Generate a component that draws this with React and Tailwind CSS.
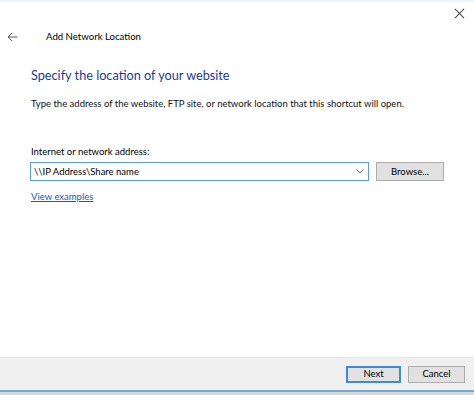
import React from 'react';

const font = { fontFamily: 'Lato, "Noto Sans", sans-serif' };

export default function App() {
  return (
    <div className="w-[474px] h-[395px] bg-white flex flex-col overflow-hidden text-[#000]" style={font}>
      {/* Title bar */}
      <div className="h-[24px] flex items-start justify-end border-t-2 border-[#eaf6fb]">
        <button className="w-[30px] h-[22px] flex items-center justify-center text-[#333]">
          <svg width="11" height="11" viewBox="0 0 12 12" stroke="#444" strokeWidth="1.1">
            <path d="M1 1 L11 11 M11 1 L1 11" />
          </svg>
        </button>
      </div>

      {/* Nav row */}
      <div className="h-[26px] flex items-center">
        <div className="w-[46px] pl-[7px] flex items-center">
          <svg width="11" height="10" viewBox="0 0 11 10" fill="none" stroke="#555" strokeWidth="1">
            <path d="M10.5 5 H1 M5 1 L1 5 L5 9" />
          </svg>
        </div>
        <span className="text-[9.6px]">Add Network Location</span>
      </div>

      {/* Content */}
      <div className="flex-1 pl-[31px] pr-[30px] flex flex-col">
        <h1 className="mt-[15px] text-[12.7px] leading-[20px] text-[#1c3a94]">Specify the location of your website</h1>
        <p className="mt-[12px] text-[9.5px] leading-[14px] text-[#111] whitespace-nowrap">
          Type the address of the website, FTP site, or network location that this shortcut will open.
        </p>
        <label className="mt-[34px] text-[9.5px] leading-[14px]">Internet or network address:</label>
        <div className="mt-[3px] flex items-center gap-[7px] -ml-px">
          <div className="w-[339px] h-[19px] border border-[#5a9bd6] flex items-center justify-between pl-[3px] pr-[4px]">
            <span className="text-[9.5px] leading-[14px]">\\IP Address\Share name</span>
            <svg width="8" height="5" viewBox="0 0 8 5" fill="none" stroke="#777" strokeWidth="1">
              <path d="M0.5 0.5 L4 4 L7.5 0.5" />
            </svg>
          </div>
          <button className="w-[68px] h-[19px] bg-[#e1e1e1] border border-[#adadad] text-[9.5px] leading-[14px]">Browse...</button>
        </div>
        <a className="mt-[9px] text-[9.5px] leading-[14px] text-[#0a5fc2] underline self-start">View examples</a>
      </div>

      {/* Footer */}
      <div className="h-[33px] bg-[#f0f0f0] border-t border-[#e6e6e6] flex items-center justify-end gap-[7px] pr-[9px]">
        <button className="w-[55px] h-[17px] bg-[#e1e1e1] border-2 border-[#3c8ad8] text-[9.5px] leading-[12px]">Next</button>
        <button className="w-[57px] h-[17px] bg-[#e1e1e1] border border-[#adadad] text-[9.5px] leading-[14px]">Cancel</button>
      </div>
      <div className="h-[2px] bg-[#72a7d6]" />
      <div className="h-[3px] bg-[#d9d9d9]" />
    </div>
  );
}
